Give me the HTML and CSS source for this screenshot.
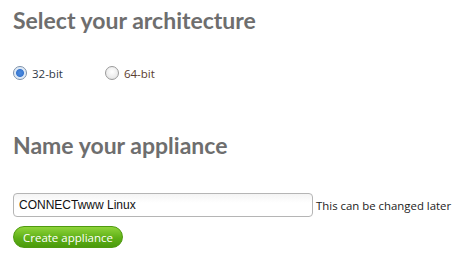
FILE: index.html
```html
<!DOCTYPE html>
<html lang="en">
<head>
    <meta charset="UTF-8">
    <title>Create appliance</title>
    <link rel="stylesheet" href="styles.css">
</head>
<body>
    <div class="wizard">
        <h2 class="section-title">Select your architecture</h2>
        <div class="arch-options">
            <label class="arch-option">
                <span class="radio checked"></span>
                <span class="arch-label">32-bit</span>
            </label>
            <label class="arch-option">
                <span class="radio"></span>
                <span class="arch-label alt">64-bit</span>
            </label>
        </div>

        <h2 class="section-title name-title">Name your appliance</h2>
        <div class="name-row">
            <input type="text" class="name-input" value="CONNECTwww Linux">
            <span class="hint">This can be changed later</span>
        </div>
        <button class="create-button">Create appliance</button>
    </div>
</body>
</html>
```

FILE: styles.css
```css
body {
    margin: 0;
    background-color: #ffffff;
    font-family: "Open Sans", "DejaVu Sans", sans-serif;
}

.wizard {
    padding: 6px 13px;
}

.section-title {
    font-family: Lato, "Open Sans", sans-serif;
    font-weight: bold;
    font-size: 23px;
    color: #6e6e6e;
    margin: 0;
    line-height: 28px;
}

.arch-options {
    display: flex;
    gap: 42px;
    margin-top: 31px;
}

.arch-option {
    display: flex;
    align-items: center;
    gap: 5px;
    font-size: 11.5px;
    height: 16px;
}

.radio {
    width: 12px;
    height: 12px;
    border-radius: 50%;
    border: 1px solid #9a9a9a;
    background: radial-gradient(circle at 50% 40%, #ffffff 0%, #ececec 60%, #d6d6d6 100%);
}

.radio.checked {
    border-color: #7a8fa8;
    background: radial-gradient(circle at 50% 50%, #4a8be0 0%, #3a78d0 42%, #d8e6f6 52%, #ffffff 100%);
}

.arch-label {
    color: #2f3a48;
}

.arch-label.alt {
    color: #5a3d2e;
}

.name-title {
    margin-top: 50px;
}

.name-row {
    display: flex;
    align-items: center;
    gap: 3px;
    margin-top: 34px;
}

.name-input {
    width: 288px;
    height: 22px;
    padding: 0 5px;
    margin: 0;
    border: 1px solid #b5b5b5;
    border-radius: 4px;
    font-family: "Liberation Sans", Arial, sans-serif;
    font-size: 12px;
    color: #111111;
    background: linear-gradient(#f4f4f4, #ffffff 40%);
}

.hint {
    font-size: 11.4px;
    color: #222222;
}

.create-button {
    display: block;
    margin-top: 9px;
    width: 110px;
    height: 22px;
    border: 1px solid #4f9a10;
    border-radius: 11px;
    background: linear-gradient(#8fd43a, #5fb017 55%, #4a9a0c);
    color: #ffffff;
    font-family: "Open Sans", sans-serif;
    font-size: 11.5px;
    padding: 0;
    cursor: pointer;
}
```
